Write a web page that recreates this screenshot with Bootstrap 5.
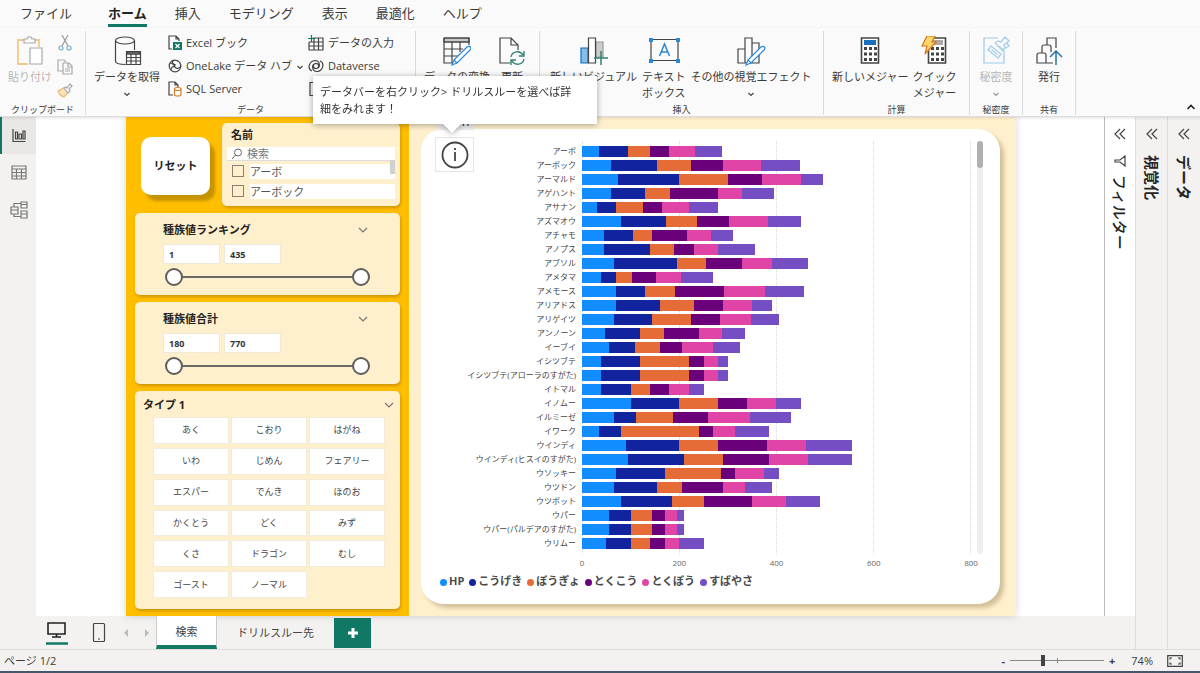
<!DOCTYPE html>
<html lang="ja">
<head>
<meta charset="utf-8">
<meta name="viewport" content="width=device-width, initial-scale=1">
<title>種族値レポート</title>
<link rel="stylesheet" href="https://cdn.jsdelivr.net/npm/bootstrap@5.3.0/dist/css/bootstrap.min.css">
<style>
:root{--teal:#117865;--ink:#3b3a39;--rail:#f3f2f1;--cream:#fff0cd;--gold:#ffbe00}
body{font-family:"Open Sans","Noto Sans CJK JP",sans-serif;font-size:11px;line-height:16px;color:var(--ink);background:var(--rail)}
svg{display:block;flex:none;fill:none;stroke:#444;stroke-width:1.2}
button,input{font-family:inherit}
.plain{background:none;border:0;padding:0;color:inherit;font-size:11px;line-height:16px}
/* menu */
.menu{background:#fafafa;height:28px;padding-left:20px;gap:28px}
.menu a{font-size:13px;line-height:20px;color:var(--ink);text-decoration:none;padding-top:3px;height:27px}
.menu a.active{font-weight:700;color:#222;border-bottom:3px solid var(--teal)}
/* ribbon */
.ribbon{background:#fafafa;height:89px;border-bottom:1px solid #ddd;box-shadow:0 1px 3px rgba(0,0,0,.12);z-index:2}
.group{border-right:1px solid #dcdcdc;margin-top:3px;height:84px;flex:none}
.group .caption{font-size:9px;line-height:12px;height:11px}
.big{display:flex;flex-direction:column;align-items:center;padding-top:5px;white-space:nowrap}
.big svg{margin-bottom:1px}
.rowbtn{display:flex;align-items:center;gap:4px;height:23px;white-space:nowrap}
.off{color:#b8b6b4}
.g-clip{width:86px}.g-data{width:330px}.g-query{width:124px}.g-insert{width:284px}.g-calc{width:146px}.g-sense{width:53px}.g-share{width:53px}
.g-insert>.d-flex{padding-left:10px;gap:5px}
/* work area */
.rail{width:36px}
.rail button{height:37px;border-left:2px solid transparent}
.rail button.on{border-left-color:var(--teal);background:#e9e8e6}
.canvas{background:#fff;padding:0 88px 0 90px}
.report{background:var(--cream);box-shadow:0 0 8px rgba(0,0,0,.16)}
.side{background:var(--gold);width:283px;padding:6px 9px 7px;gap:7px}
.tile{background:var(--cream);border-radius:5px;box-shadow:1px 2px 3px rgba(120,80,0,.35)}
.tile h2{font-size:11px;line-height:16px;font-weight:700;color:#252423;margin:0}
.reset{width:69px;height:58px;background:#fff;border:0;border-radius:10px;font-size:11px;font-weight:700;color:#222;box-shadow:5px 6px 3px rgba(130,95,0,.45);margin:14px 0 0 6px}
.names{width:178px;height:83px;padding:4px 5px 0 5px}
.search{background:#fff;height:14px;border-bottom:1px solid #ddd;padding-left:4px}
.search svg{stroke:#666;stroke-width:1}
.search input{border:0;outline:0;background:none;font-size:11px;height:14px;width:120px;padding:0}
.search input::placeholder{color:#777;opacity:1}
.pick{height:20px;gap:6px;padding-left:5px}
.pick input{appearance:none;width:12px;height:12px;border:1px solid #8a8170;margin:0}
.pick label{background:#fff;flex:1;height:15px;line-height:15px;color:#555}
.thumb{width:5px;height:14px;background:#d0d0d0;top:-1px;right:0}
.slicer{height:82px;padding:9px 28px 0 28px}
.nums{margin-top:6px;gap:4px}
.num{width:57px;height:20px;border:1px solid #f0e8d8;background:#fff;font-size:9px;font-weight:700;color:#333;padding:0 5px}
.dual{height:20px;margin:3px 2px 0 2px}
.dual::before{content:"";position:absolute;left:10px;right:10px;top:9px;height:2px;background:#6b6964}
.dual input{position:absolute;inset:0;width:100%;height:20px;appearance:none;background:none;pointer-events:none;margin:0}
.dual input::-webkit-slider-thumb{appearance:none;width:18px;height:18px;border-radius:50%;background:#fff;border:2px solid #605e5c;pointer-events:auto}
.types{padding:6px 6px 11px 8px}
.typegrid{display:grid;grid-template-columns:repeat(3,1fr);grid-template-rows:repeat(6,1fr);gap:4px 2px;margin:4px 9px 0 10px}
.typegrid button{background:#fff;border:1px solid #f2ebdc;font-size:9px;line-height:12px;color:#444;padding:0}
/* chart */
.chart{background:#fff;border-radius:22px;margin:12px 16px 12px 12px;box-shadow:4px 4px 4px rgba(90,70,20,.28);padding:12px 17px 15px 0}
.labels{width:155px;font-size:8px;line-height:14px;text-align:right;padding-top:3px;color:#444}
.plot{margin-left:6px;padding-top:3px;height:413px}
.bars{z-index:1}
.bar{height:14px;padding:2px 0 1px;display:flex}
.grid i{width:0;border-left:1px dotted #d8d8d8}
.track{width:6px;height:413px;border-radius:3px;background:#eee;margin-left:6px}
.track div{width:6px;height:27px;border-radius:3px;background:#b0b0b0}
.axis{margin:4px 12px 0 161px;font-size:8px;line-height:10px;color:#666}
.axis span{width:0;display:flex;justify-content:center}
.legendrow{gap:5px;margin:5px 0 0 19px;font-size:11px;font-weight:700;color:#4a4a4a}
.legendrow span{display:flex;align-items:center;gap:2px}
.legendrow i{width:7px;height:7px;border-radius:50%;margin-top:2px}
.hp{background:#118dff}.at{background:#12239e}.de{background:#e66c37}.sa{background:#6b007b}.sd{background:#e044a7}.sp{background:#744ec2}
.info{left:14px;top:8px;z-index:5}
.info>button{width:39px;height:35px;border:1px solid #e6e6e6;background:#fff;padding:0;display:flex;align-items:center;justify-content:center}
.grip{left:2px;bottom:42px;width:37px;height:10px;background:#eee;display:flex;justify-content:end;padding-right:4px}
.tip{left:-122px;bottom:48px;width:284px;height:48px;background:#fff;padding:7px 20px 7px 7px;line-height:17px;font-size:11px;color:#333;filter:drop-shadow(0 1px 3px rgba(0,0,0,.35))}
.tip::after{content:"";position:absolute;left:130px;top:100%;border:9px solid transparent;border-top-color:#fff;border-bottom:0}
/* side panes */
.pane{width:33px;border-left:1px solid #dedddb;background:var(--rail);padding-top:10px;gap:14px}
.pane span{writing-mode:vertical-rl;text-orientation:sideways;font-size:15px;line-height:20px;font-weight:700;color:#252423}
.pane.visual{width:32px}
.pane.filter{background:#fff;width:31px;border-left:1px solid #bbb}
.pane.filter span{font-weight:500}
/* bottom */
.tabs{height:33px;padding-left:6px}
.turn{margin:0 5px 0 8px}
.tabs .page{height:33px;border:0;background:none;font-size:11px;color:#444}
.tabs .page.on{background:#fff;border-bottom:4px solid var(--teal);border-left:1px solid #ccc;border-right:1px solid #ccc;padding-top:4px;width:61px}
.add{width:37px;height:30px;margin-top:2px;background:var(--teal);border:0;padding:0;display:flex;align-items:center;justify-content:center}
.status{height:24px;border-top:1px solid #dedddb;border-bottom:2px solid #46566b;padding:0 17px 0 4px}
.zoom{appearance:none;width:94px;height:14px;margin:0 5px;background:linear-gradient(#888,#888) center/100% 1px no-repeat,linear-gradient(#888,#888) center/1px 5px no-repeat}
.zoom::-webkit-slider-thumb{appearance:none;width:4px;height:11px;background:#444}
.fit{margin-left:14px}
</style>
</head>
<body>
<div class="d-flex flex-column min-vh-100">
<nav class="menu d-flex">
<a href="#">ファイル</a><a href="#" class="active ms-2">ホーム</a><a href="#">挿入</a><a href="#">モデリング</a><a href="#">表示</a><a href="#">最適化</a><a href="#">ヘルプ</a>
</nav>

<header class="ribbon d-flex position-relative">
<section class="group g-clip d-flex flex-column">
<div class="d-flex flex-fill ps-2 off">
<button class="plain big"><svg width="28" height="32" viewBox="0 0 28 32"><path stroke="#f3c98b" stroke-width="1.8" d="M8 4H2v24h10M19 4h4v7"/><path stroke="#aaa" d="M8 6V3h3c0-3 5-3 5 0h3v4H8z"/><path fill="#fff" stroke="#aaa" d="M14 12h12v16H14z"/></svg><span>貼り付け</span></button>
<div class="d-flex flex-column ms-1 pt-1 gap-2">
<svg width="18" height="16" viewBox="0 0 18 16"><path stroke="#999" d="M6 0l6 11M12 0L6 11"/><circle cx="5" cy="13" r="2" stroke="#78add2"/><circle cx="13" cy="13" r="2" stroke="#78add2"/></svg>
<svg width="18" height="16" viewBox="0 0 18 16"><path stroke="#aaa" d="M7 12H2V1h6l2 2M7 4h6l3 3v8H7zM12 4v4h4M9 10h5M9 12h5"/></svg>
<svg width="18" height="16" viewBox="0 0 18 16"><path fill="#fbe2b8" stroke="#e9b76f" d="M8 5L2 8c1 3 3 5 6 6l4-5z"/><path fill="#fff" stroke="#aaa" d="M8 5l2-1 1 1 3-4 2 2-3 3 1 2-2 2z"/></svg>
</div></div>
<div class="caption text-center">クリップボード</div></section>

<section class="group g-data d-flex flex-column">
<div class="d-flex flex-fill ps-2">
<button class="plain big"><svg width="30" height="32" viewBox="0 0 30 32"><ellipse cx="13" cy="4.500" rx="9.500" ry="3.500"/><path d="M3.500 5v20c0 2 4 3.500 10 3.500M22.500 5v9"/><path fill="#fff" d="M14.500 15.500h14v13h-14zM14.500 18h14M14.500 21.500h14M14.500 25h14M19 18v10M24 18v10"/><path fill="#777" d="M15 16h13v2H15z"/></svg><span>データを取得</span><svg width="8" height="16" viewBox="0 0 8 16"><path d="M1.500 8L4 10.500 6.500 8"/></svg></button>
<div class="ms-1 ps-1">
<button class="plain rowbtn"><svg width="14" height="16" viewBox="0 0 14 16"><path d="M4 14H1V1h7l3 3v2M8 1v3h3"/><path fill="#117865" stroke="none" d="M5 7h9v8H5z"/><path stroke="#fff" d="M7.500 9l4 4M11.500 9l-4 4"/></svg>Excel ブック</button>
<button class="plain rowbtn"><svg width="14" height="14" viewBox="0 0 14 14"><circle cx="7" cy="7" r="5.800"/><path d="M2 4c3 0 4 2 5 4s4 2 6-1M5 1c-1 3 0 5 3 5M3 11c0-3 2-4 4-3"/></svg>OneLake データ ハブ<svg width="8" height="16" viewBox="0 0 8 16"><path d="M1.500 8l2.500 2.500L6.500 8"/></svg></button>
<button class="plain rowbtn"><svg width="14" height="16" viewBox="0 0 14 16"><path d="M5 14H1V1h6l3 3v2M7 1v3h3"/><path fill="#fff" stroke="#d67b2c" d="M6.500 8v5.500c0 2 6.500 2 6.500 0V8"/><ellipse cx="9.700" cy="8" rx="3.300" ry="1.500" fill="#fff" stroke="#d67b2c"/></svg>SQL Server</button>
</div>
<div class="ms-1">
<button class="plain rowbtn"><svg width="16" height="16" viewBox="0 0 16 16"><path d="M5 3h10v12H1V7M1 7h14M1 11h14M6 3v12M10.500 3v12"/><path stroke="#117865" d="M3.500 0v7M0 3.500h7"/></svg>データの入力</button>
<button class="plain rowbtn"><svg width="16" height="14" viewBox="0 0 16 14"><path d="M4 12C-1 10 1 2 7 1.500c5 0 6 7 1.500 8-4 .5-4-5-.5-5M12 2c5 2 3 10-3 10.500-5 0-6-7-1.500-8 4-.5 4 5 .5 5"/></svg>Dataverse</button>
<button class="plain rowbtn" aria-label="最近のソース"><svg width="16" height="16" viewBox="0 0 16 16"><path d="M2 1.500h8l3 3v10H2z"/></svg></button>
</div></div>
<div class="caption text-center">データ</div></section>

<section class="group g-query d-flex flex-column">
<div class="d-flex flex-fill ps-2 gap-2">
<button class="plain big"><svg width="28" height="32" viewBox="0 0 28 32"><path fill="#c8c8c8" d="M1 2h25v4H1z"/><path d="M1 2h25v7M1 2v25h10M1 6h25M1 13h19M1 20h14M9 6v21M17 6v10"/><path fill="#fff" stroke="#2b88d8" d="M11 24L24 11c3-2 5 1 3 3L14 27l-5 2zM11 24l3 3"/></svg><span>データの変換</span></button>
<button class="plain big"><svg width="28" height="32" viewBox="0 0 28 32"><path d="M12 27H2V2h11l7 7v5M13 2v7h7"/><path stroke="#2f8373" stroke-width="1.400" d="M13 21c1-6 9-7 12-2M26 15v5h-5M26 23c-1 6-9 7-12 2M13 29v-5h5"/></svg><span>更新</span></button>
</div></section>

<section class="group g-insert d-flex flex-column">
<div class="d-flex flex-fill">
<button class="plain big"><svg width="30" height="32" viewBox="0 0 30 32"><path fill="#83bdeb" stroke="#1670bd" d="M3 12h7v15H3z"/><path fill="#ccc" stroke="#999" d="M18 6h7v15h-7z"/><path fill="#fff" d="M10.500 2h7v25h-7z"/><path stroke="#2f8373" stroke-width="1.500" d="M23 15v14M16 22h14"/></svg><span>新しいビジュアル</span></button>
<button class="plain big"><svg width="32" height="32" viewBox="0 0 32 32"><path d="M3 3.500h27v21H3z"/><path stroke="#2b88d8" stroke-width="1.500" d="M11.500 20l5-12 5 12M13 16h7"/><path fill="#2b88d8" stroke="none" d="M1 2h4v4H1zM28 2h4v4h-4zM1 23h4v4H1zM28 23h4v4h-4z"/></svg><span>テキスト</span><span>ボックス</span></button>
<button class="plain big"><svg width="30" height="32" viewBox="0 0 30 32"><path d="M2 13h7v14H2zM9 2h7v25H9zM16 7h7v20h-7"/><path fill="#fff" stroke="#2b88d8" d="M12 24L25 11c3-2 5 1 3 3L15 27l-5 2zM12 24l3 3"/></svg><span>その他の視覚エフェクト</span><svg width="8" height="16" viewBox="0 0 8 16"><path d="M1.500 8L4 10.500 6.500 8"/></svg></button>
</div><div class="caption text-center">挿入</div></section>

<section class="group g-calc d-flex flex-column">
<div class="d-flex flex-fill ps-2 gap-1">
<button class="plain big"><svg width="24" height="32" viewBox="0 0 24 32"><path fill="#fff" stroke-width="1.600" d="M3.500 2h17v25h-17z"/><path fill="#1670bd" stroke="none" d="M6 4h12v5H6z"/><path stroke-width="3" stroke-dasharray="3 2" d="M6 12.500h13M6 18h13M6 23.500h13"/></svg><span>新しいメジャー</span></button>
<button class="plain big"><svg width="28" height="32" viewBox="0 0 28 32"><path fill="#fff" stroke-width="1.600" d="M8.500 2h17v25h-17z"/><path fill="#aaa" stroke="none" d="M13 4h10v5H13z"/><path stroke-width="3" stroke-dasharray="3 2" d="M11 12.500h13M11 18h13M11 23.500h13"/><path fill="#ffd66b" stroke="#d8761a" d="M7 0h8l-3 6h4L5 18l2-8H2z"/></svg><span>クイック</span><span>メジャー</span></button>
</div><div class="caption text-center">計算</div></section>

<section class="group g-sense d-flex flex-column">
<button class="plain big flex-fill off"><svg width="30" height="32" viewBox="0 0 30 32"><path stroke="#9bc9e8" d="M17 2H3v25h20V15"/><path stroke="#a8d0ea" stroke-width="1.400" d="M10 10l10 8-3 4-10-8zM10.500 13.500l6 5M14 7l3-2 3 1 4-5 4 4-5 4 1 3-2 3zM16 9l7 5M26 7l2 3-5 3"/></svg><span>秘密度</span><svg width="8" height="16" viewBox="0 0 8 16"><path stroke="#999" d="M1.500 8L4 10.500 6.500 8"/></svg></button>
<div class="caption text-center">秘密度</div></section>
<section class="group g-share d-flex flex-column">
<button class="plain big flex-fill"><svg width="28" height="32" viewBox="0 0 28 32"><path d="M2 27V19q0-2 2-2h5q2 0 2 2v8zM7 17v-6q0-2 2-2h5q2 0 2 2v5M11 27h7M12 9V2h9v10"/><path stroke="#2474aa" stroke-width="1.500" d="M21 29V15M15 21l6-6 6 6"/></svg><span>発行</span></button>
<div class="caption text-center">共有</div></section>
<button class="plain ms-auto align-self-end me-1 mb-1" aria-label="リボンを折りたたむ"><svg width="10" height="10" viewBox="0 0 10 10"><path stroke="#222" stroke-width="1.600" d="M1.500 7L5 3.500 8.500 7"/></svg></button>
</header>

<div class="d-flex flex-fill">
<aside class="rail d-flex flex-column">
<button class="plain on d-flex align-items-center justify-content-center" aria-label="レポート"><svg width="14" height="15" viewBox="0 0 14 15" stroke-width="1.400"><path d="M1 1v12.500h12.500M3.500 11V4h2v7zM7 11V6h2.500v5zM11 11V3h2v8z"/></svg></button>
<button class="plain d-flex align-items-center justify-content-center" aria-label="テーブル"><svg width="16" height="15" viewBox="0 0 16 15" style="stroke:#777"><path d="M1 1h14v13H1zM1 4h14M1 7.500h14M1 11h14M5.500 4v10M10.500 4v10"/></svg></button>
<button class="plain d-flex align-items-center justify-content-center" aria-label="モデル"><svg width="18" height="18" viewBox="0 0 18 18" style="stroke:#777"><path d="M1 6h7v7H1zM1 9h7M11 1h6v6h-6zM11 3.500h6M11 10h6v7h-6zM11 13h6M4 6V2.500h7M4 13v2.500h7"/></svg></button>
</aside>

<div class="d-flex flex-column flex-fill">
<div class="d-flex flex-fill">
<main class="canvas d-flex flex-fill">
<div class="report d-flex flex-fill">

<div class="side d-flex flex-column">
<div class="d-flex justify-content-between">
<button class="reset">リセット</button>
<div class="tile names">
<h2 class="ps-1 mb-1">名前</h2>
<div class="search d-flex align-items-center gap-1"><svg width="12" height="12" viewBox="0 0 12 12"><circle cx="7" cy="4.500" r="3.500"/><path d="M4.500 7L1 11"/></svg><input type="text" placeholder="検索" aria-label="検索"></div>
<div class="position-relative">
<div class="pick d-flex align-items-center"><input type="checkbox" id="p1"><label for="p1">アーボ</label></div>
<div class="pick d-flex align-items-center"><input type="checkbox" id="p2"><label for="p2">アーボック</label></div>
<div class="thumb position-absolute"></div>
</div></div></div>

<div class="tile slicer">
<div class="d-flex justify-content-between align-items-center"><h2>種族値ランキング</h2><svg class="me-1" width="10" height="10" viewBox="0 0 10 10"><path d="M1 3l4 4 4-4" stroke="#777"/></svg></div>
<div class="nums d-flex"><input class="num" value="1" aria-label="最小順位"><input class="num" value="435" aria-label="最大順位"></div>
<div class="dual position-relative"><input type="range" min="1" max="435" value="1" aria-label="最小"><input type="range" min="1" max="435" value="435" aria-label="最大"></div>
</div>
<div class="tile slicer">
<div class="d-flex justify-content-between align-items-center"><h2>種族値合計</h2><svg class="me-1" width="10" height="10" viewBox="0 0 10 10"><path d="M1 3l4 4 4-4" stroke="#777"/></svg></div>
<div class="nums d-flex"><input class="num" value="180" aria-label="最小合計"><input class="num" value="770" aria-label="最大合計"></div>
<div class="dual position-relative"><input type="range" min="180" max="770" value="180" aria-label="最小"><input type="range" min="180" max="770" value="770" aria-label="最大"></div>
</div>
<div class="tile types d-flex flex-column flex-fill">
<div class="d-flex justify-content-between align-items-center"><h2>タイプ 1</h2><svg width="10" height="10" viewBox="0 0 10 10"><path d="M1 3l4 4 4-4" stroke="#777"/></svg></div>
<div class="typegrid flex-fill">
<button>あく</button><button>こおり</button><button>はがね</button>
<button>いわ</button><button>じめん</button><button>フェアリー</button>
<button>エスパー</button><button>でんき</button><button>ほのお</button>
<button>かくとう</button><button>どく</button><button>みず</button>
<button>くさ</button><button>ドラゴン</button><button>むし</button>
<button>ゴースト</button><button>ノーマル</button>
</div></div>
</div>

<section class="chart position-relative flex-fill">
<div class="info position-absolute">
<div class="grip position-absolute"><svg width="8" height="8" viewBox="0 0 8 8"><path d="M1.500 3v3M6 3v3"/></svg></div>
<div class="tip position-absolute" role="tooltip">データバーを右クリック&gt; ドリルスルーを選べば詳細をみれます！</div>
<button aria-label="情報"><svg width="28" height="28" viewBox="0 0 28 28"><circle cx="14" cy="14" r="12.500" stroke-width="1.800"/><path stroke-width="1.800" d="M14 11v9M14 7v2"/></svg></button>
</div>
<div class="d-flex">
<div class="labels" id="labels"></div>
<div class="plot position-relative flex-fill">
<div class="grid position-absolute top-0 start-0 w-100 h-100 d-flex justify-content-between"><i></i><i></i><i></i><i></i><i></i></div>
<div class="bars position-relative" id="bars"></div>
</div>
<div class="track"><div></div></div>
</div>
<div class="axis d-flex justify-content-between"><span>0</span><span>200</span><span>400</span><span>600</span><span>800</span></div>
<div class="legendrow d-flex"><span><i class="hp"></i>HP</span><span><i class="at"></i>こうげき</span><span><i class="de"></i>ぼうぎょ</span><span><i class="sa"></i>とくこう</span><span><i class="sd"></i>とくぼう</span><span><i class="sp"></i>すばやさ</span></div>
</section>
</div>
</main>
<aside class="pane filter d-flex flex-column align-items-center"><svg width="12" height="14" viewBox="0 0 12 14"><path d="M6 2L1 7l5 5M11 2L6 7l5 5"/></svg><div class="d-flex flex-column align-items-center gap-2"><svg width="12" height="12" viewBox="0 0 12 12"><path d="M11 1v10L6 7H1V5h5z"/></svg><span>フィルター</span></div></aside>
</div>
<div class="tabs d-flex">
<button class="plain me-3 px-1" aria-label="デスクトップ"><svg width="22" height="24" viewBox="0 0 22 24"><path stroke="#222" stroke-width="1.600" d="M2 2h17v11H2zM10.500 13v3M6 16h9"/><path stroke="#117865" stroke-width="2.500" d="M0 22.500h22"/></svg></button>
<button class="plain ms-1 me-2" aria-label="モバイル"><svg width="14" height="22" viewBox="0 0 14 22"><rect x="1.500" y="1.500" width="11" height="18" rx="1"/><path d="M6 17h2"/></svg></button>
<button class="plain turn" aria-label="前"><svg width="8" height="10" viewBox="0 0 8 10"><path fill="#bbb" stroke="none" d="M6 1v8L2 5z"/></svg></button>
<button class="plain turn" aria-label="次"><svg width="8" height="10" viewBox="0 0 8 10"><path fill="#bbb" stroke="none" d="M2 1v8l4-4z"/></svg></button>
<button class="page on">検索</button>
<button class="page px-3 mx-1">ドリルスルー先</button>
<button class="add" aria-label="ページを追加"><svg width="12" height="12" viewBox="0 0 12 12"><path stroke="#fff" stroke-width="3" d="M6 1v10M1 6h10"/></svg></button>
</div>
</div>
<aside class="pane visual d-flex flex-column align-items-center"><svg width="12" height="14" viewBox="0 0 12 14"><path d="M6 2L1 7l5 5M11 2L6 7l5 5"/></svg><span>視覚化</span></aside>
<aside class="pane d-flex flex-column align-items-center"><svg width="12" height="14" viewBox="0 0 12 14"><path d="M6 2L1 7l5 5M11 2L6 7l5 5"/></svg><span>データ</span></aside>
</div>

<footer class="status d-flex align-items-center">
<span>ページ 1/2</span>
<span class="ms-auto fw-bold">-</span><input class="zoom" type="range" min="0" max="100" value="34" aria-label="ズーム"><span class="fw-bold">+</span>
<span class="ms-3">74%</span>
<svg class="fit" width="16" height="12" viewBox="0 0 16 12"><path d="M.7.700h14.600v10.600H.7zM3 4.500V3h2M11 3h2v1.500M3 7.500V9h2M11 9h2V7.500"/></svg>
</footer>
</div>
<script src="https://cdn.jsdelivr.net/npm/bootstrap@5.3.0/dist/js/bootstrap.bundle.min.js"></script>
<script>
const rows = [
["アーボ",35,60,44,40,54,55],["アーボック",60,95,69,65,79,80],["アーマルド",75,125,100,70,80,45],
["アゲハント",60,70,50,100,50,65],["アサナン",30,40,55,40,55,60],["アズマオウ",80,92,65,65,80,68],
["アチャモ",45,60,40,70,50,45],["アノプス",45,95,50,40,50,75],["アブソル",65,130,60,75,60,75],
["アメタマ",40,30,32,50,52,65],["アメモース",70,60,62,100,85,80],["アリアドス",70,90,70,60,60,40],
["アリゲイツ",65,80,80,59,63,58],["アンノーン",48,72,48,72,48,48],["イーブイ",55,55,50,45,65,55],
["イシツブテ",40,80,100,30,30,20],["イシツブテ(アローラのすがた)",40,80,100,30,30,20],["イトマル",40,60,40,40,40,30],
["イノムー",100,100,80,60,60,50],["イルミーゼ",65,47,75,73,85,85],["イワーク",35,45,160,30,45,70],
["ウインディ",90,110,80,100,80,95],["ウインディ(ヒスイのすがた)",95,115,80,95,80,90],["ウソッキー",70,100,115,30,60,30],
["ウツドン",65,90,50,85,45,55],["ウツボット",80,105,65,100,70,70],["ウパー",55,45,45,25,25,15],
["ウパー(パルデアのすがた)",55,45,45,25,25,15],["ウリムー",50,50,40,30,30,50]];
const kinds = ["hp","at","de","sa","sd","sp"];
document.getElementById("labels").innerHTML = rows.map(r => `<div>${r[0]}</div>`).join("");
document.getElementById("bars").innerHTML = rows.map(r =>
  `<div class="bar">${kinds.map((k, i) => `<div class="${k}" style="width:${r[i + 1] / 8}%"></div>`).join("")}</div>`).join("");
</script>
</body>
</html>
